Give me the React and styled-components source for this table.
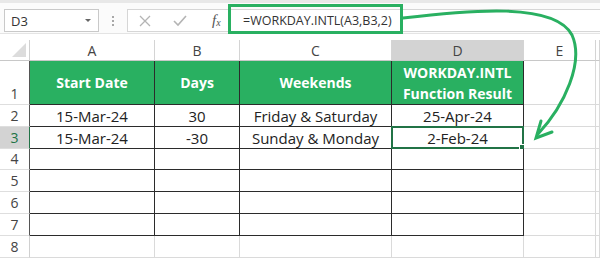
import styled, { createGlobalStyle } from "styled-components";

const GlobalStyle = createGlobalStyle`
  html, body {
    margin: 0;
    padding: 0;
    background: #ffffff;
  }
  body {
    width: 600px;
    height: 258px;
    overflow: hidden;
    font-family: "Open Sans", "Liberation Sans", sans-serif;
  }
`;

const GREEN = "#29b061";
const SELECT = "#217346";
const DARK = "#2b2b2b";
const LIGHT = "#dadada";

const columns = [
  { key: "A", width: 125 },
  { key: "B", width: 85 },
  { key: "C", width: 152 },
  { key: "D", width: 132 },
  { key: "E", width: 72 },
  { key: "F", width: 4 },
];

const rowHeights = [44, 22, 22, 21, 22, 22, 22, 22];

const data = [
  ["Start Date", "Days", "Weekends", ["WORKDAY.INTL", "Function Result"]],
  ["15-Mar-24", "30", "Friday & Saturday", "25-Apr-24"],
  ["15-Mar-24", "-30", "Sunday & Monday", "2-Feb-24"],
  ["", "", "", ""],
  ["", "", "", ""],
  ["", "", "", ""],
  ["", "", "", ""],
];

export default function App() {
  return (
    <Page>
      <GlobalStyle />
      <TopBand />
      <FormulaBar>
        <NameBox>
          D3
          <Caret />
        </NameBox>
        <Dots>
          <i />
          <i />
          <i />
        </Dots>
        <ButtonsBox>
          <IconSlot>
            <svg width="12" height="12" viewBox="0 0 12 12">
              <path d="M1 1 L11 11 M11 1 L1 11" stroke="#b4b4b4" strokeWidth="1.3" fill="none" />
            </svg>
          </IconSlot>
          <IconSlot>
            <svg width="14" height="12" viewBox="0 0 14 12">
              <path d="M1 6 L5 10 L13 1" stroke="#b4b4b4" strokeWidth="1.6" fill="none" />
            </svg>
          </IconSlot>
          <Fx>
            f<sub>x</sub>
          </Fx>
        </ButtonsBox>
        <FormulaField>=WORKDAY.INTL(A3,B3,2)</FormulaField>
        <FormulaHighlight />
      </FormulaBar>

      <Sheet>
        <Corner />
        {columns.map((c) => (
          <ColHeader key={c.key} $selected={c.key === "D"}>
            {c.key === "F" ? "" : c.key}
          </ColHeader>
        ))}

        {rowHeights.map((h, r) => {
          const row = data[r];
          const inTable = r < 7;
          return [
            <RowHeader key={`h${r}`} $selected={r === 2} $dark={inTable}>
              {r + 1}
            </RowHeader>,
            ...columns.map((c, ci) => {
              const table = inTable && ci < 4;
              const value = table ? row[ci] : "";
              return (
                <Cell
                  key={`${r}-${c.key}`}
                  $table={table}
                  $head={table && r === 0}
                  $lastTableRow={r === 6 && ci < 4}
                >
                  {Array.isArray(value) ? (
                    <Stack>
                      {value.map((v) => (
                        <span key={v}>{v}</span>
                      ))}
                    </Stack>
                  ) : (
                    value
                  )}
                  {r === 2 && ci === 3 && <Selection />}
                </Cell>
              );
            }),
          ];
        })}
      </Sheet>

      <Arrow width="600" height="258" viewBox="0 0 600 258">
        <path
          d="M403 18 C470 10 555 2 572 35 C584 62 565 105 538 134"
          stroke={GREEN}
          strokeWidth="3"
          fill="none"
          strokeLinecap="round"
        />
        <path
          d="M541 121 L536 138 L552 132"
          stroke={GREEN}
          strokeWidth="3"
          fill="none"
          strokeLinecap="round"
          strokeLinejoin="miter"
        />
      </Arrow>
    </Page>
  );
}

const Page = styled.div`
  position: relative;
  width: 600px;
  height: 258px;
  overflow: hidden;
  background: #ffffff;
`;

const TopBand = styled.div`
  height: 3px;
  background: #e8e8e8;
`;

const FormulaBar = styled.div`
  position: relative;
  height: 31px;
  display: flex;
  align-items: flex-start;
  padding: 6px 0 0 4px;
  background: #fbfbfb;
  border-bottom: 1px solid #e4e4e4;
  box-sizing: border-box;
  margin-bottom: 6px;
`;

const NameBox = styled.div`
  position: relative;
  width: 95px;
  height: 23px;
  box-sizing: border-box;
  border: 1px solid #c9c9c9;
  background: #ffffff;
  font-size: 13px;
  color: #333;
  padding-left: 6px;
  display: flex;
  align-items: center;
`;

const Caret = styled.span`
  position: absolute;
  right: 7px;
  top: 9px;
  border-left: 3px solid transparent;
  border-right: 3px solid transparent;
  border-top: 3px solid #666;
`;

const Dots = styled.div`
  width: 28px;
  height: 23px;
  display: flex;
  flex-direction: column;
  align-items: center;
  justify-content: center;
  gap: 2px;

  i {
    width: 2px;
    height: 2px;
    background: #a8a8a8;
  }
`;

const ButtonsBox = styled.div`
  width: 102px;
  height: 23px;
  box-sizing: border-box;
  border: 1px solid #d6d6d6;
  border-right: none;
  background: #ffffff;
  display: flex;
  align-items: center;
  padding-left: 11px;
  gap: 22px;
`;

const IconSlot = styled.span`
  display: flex;
  align-items: center;
`;

const Fx = styled.span`
  font-family: "Liberation Serif", serif;
  font-style: italic;
  font-size: 15px;
  color: #555;
  margin-left: 3px;

  sub {
    font-size: 10px;
    vertical-align: -1px;
  }
`;

const FormulaField = styled.div`
  flex: 1;
  height: 23px;
  box-sizing: border-box;
  border: 1px solid #d6d6d6;
  border-right: none;
  background: #ffffff;
  display: flex;
  align-items: center;
  padding-left: 13px;
  font-size: 12.5px;
  color: #333;
`;

const FormulaHighlight = styled.div`
  position: absolute;
  left: 228px;
  top: 1px;
  width: 175px;
  height: 30px;
  box-sizing: border-box;
  border: 3px solid ${GREEN};
`;

const Sheet = styled.div`
  display: grid;
  grid-template-columns: 30px ${columns.map((c) => `${c.width}px`).join(" ")};
  grid-template-rows: 21px ${rowHeights.map((h) => `${h}px`).join(" ")};
  font-size: 15px;
  color: #222;
`;

const Corner = styled.div`
  position: relative;
  box-sizing: border-box;
  border-right: 1px solid #d0d0d0;
  border-bottom: 1px solid #c8c8c8;

  &::after {
    content: "";
    position: absolute;
    right: 3px;
    bottom: 3px;
    border-left: 14px solid transparent;
    border-bottom: 14px solid #dcdcdc;
  }
`;

const ColHeader = styled.div`
  box-sizing: border-box;
  display: flex;
  align-items: center;
  justify-content: center;
  border-right: 1px solid #d4d4d4;
  border-bottom: 1px solid #c8c8c8;
  background: ${(p) => (p.$selected ? "#d3d3d3" : "#ffffff")};
  color: #444;
  font-size: 14px;
`;

const RowHeader = styled.div`
  box-sizing: border-box;
  display: flex;
  align-items: flex-end;
  justify-content: center;
  padding-bottom: 1px;
  border-bottom: 1px solid #dedede;
  border-right: 1px solid
    ${(p) => (p.$selected ? SELECT : p.$dark ? "#555" : "#d0d0d0")};
  background: ${(p) => (p.$selected ? "#d3d3d3" : "#ffffff")};
  color: ${(p) => (p.$selected ? SELECT : "#444")};
  font-size: 14px;
`;

const Cell = styled.div`
  position: relative;
  box-sizing: border-box;
  display: flex;
  align-items: center;
  justify-content: center;
  white-space: nowrap;
  border-right: 1px solid ${(p) => (p.$table ? DARK : LIGHT)};
  border-bottom: 1px solid
    ${(p) => (p.$table || p.$lastTableRow ? DARK : LIGHT)};
  background: ${(p) => (p.$head ? GREEN : "#ffffff")};
  color: ${(p) => (p.$head ? "#ffffff" : "#222")};
  font-weight: ${(p) => (p.$head ? 700 : 400)};
  font-size: ${(p) => (p.$head ? "14px" : "15px")};
`;

const Stack = styled.div`
  display: flex;
  flex-direction: column;
  align-items: center;
  line-height: 21px;
`;

const Selection = styled.div`
  position: absolute;
  left: -1px;
  top: -1px;
  right: -1px;
  bottom: -1px;
  border: 2px solid ${SELECT};
  pointer-events: none;

  &::after {
    content: "";
    position: absolute;
    right: -4px;
    bottom: -4px;
    width: 5px;
    height: 5px;
    background: ${SELECT};
    border: 1px solid #ffffff;
  }
`;

const Arrow = styled.svg`
  position: absolute;
  left: 0;
  top: 0;
  pointer-events: none;
`;
